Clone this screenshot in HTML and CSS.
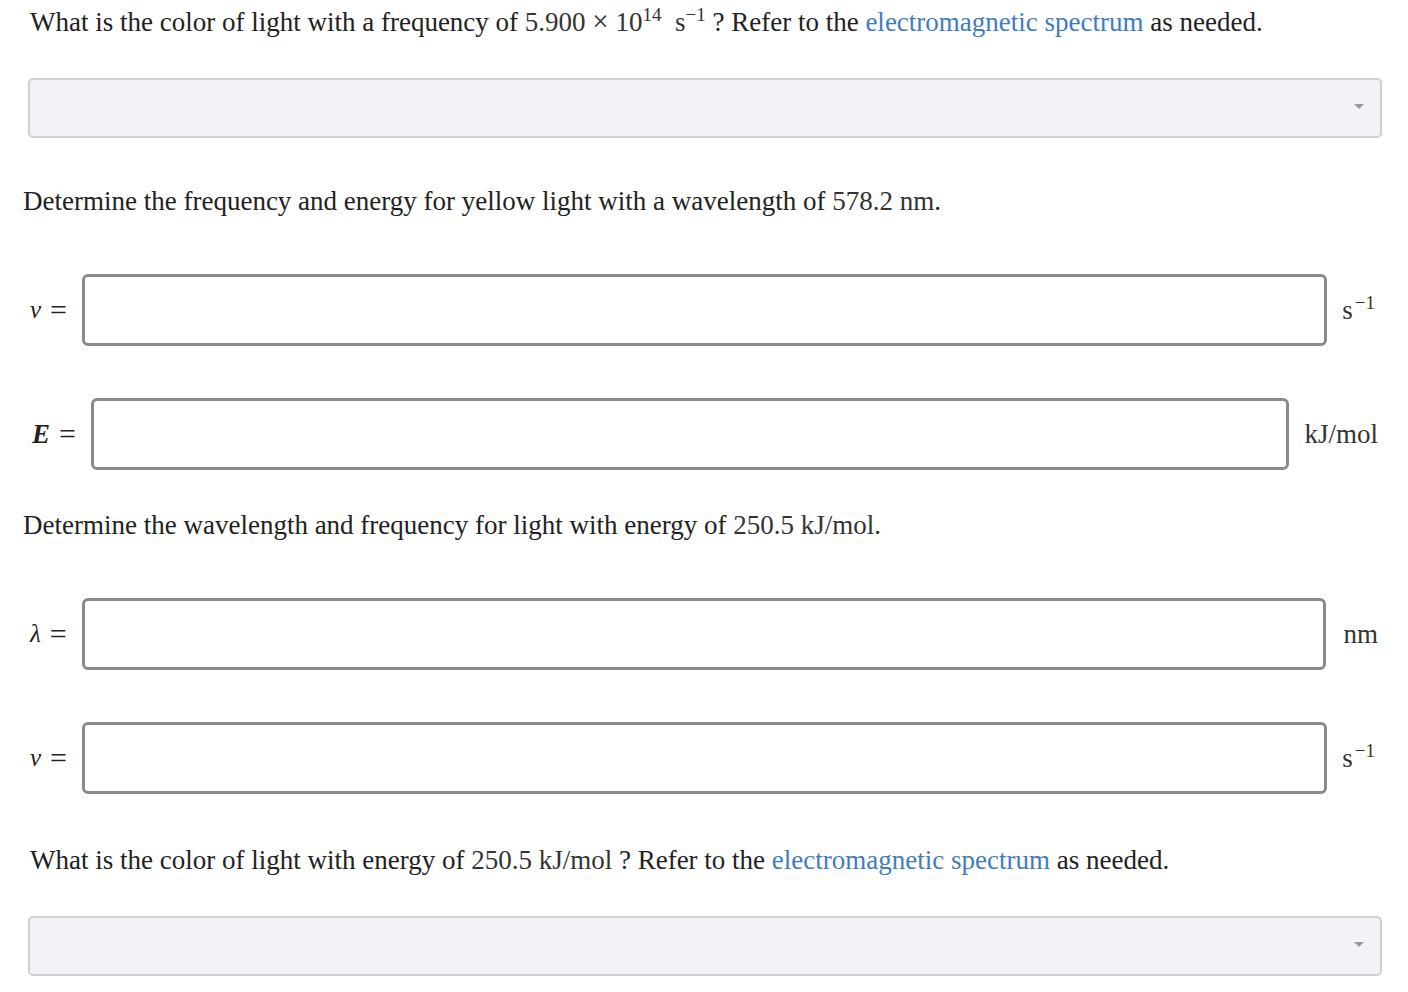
FILE: index.html
```html
<!DOCTYPE html>
<html lang="en">
<head>
    <meta charset="UTF-8">
    <meta name="viewport" content="width=device-width, initial-scale=1.0">
    <title>Light Questions</title>
    <link rel="stylesheet" href="styles.css">
</head>
<body>
    <!-- Part 1: colour from frequency -->
    <p class="prompt prompt-top">What is the color of light with a frequency of <span class="math">5.900 <span class="times">×</span> 10<sup>14</sup>&nbsp; s<sup>−1</sup></span> ? Refer to the <a href="#" class="link">electromagnetic spectrum</a> as needed.</p>
    <div class="select-box"><span class="arrow"></span></div>

    <!-- Part 2: frequency and energy -->
    <p class="prompt prompt-mid">Determine the frequency and energy for yellow light with a wavelength of <span class="math">578.2 nm</span>.</p>
    <div class="answer-row row-first">
        <span class="label"><i>ν</i><span class="eq">=</span></span>
        <div class="input-box"></div>
        <span class="unit unit-inv">s<sup>−1</sup></span>
    </div>
    <div class="answer-row row-next">
        <span class="label label-e"><i class="big">E</i><span class="eq">=</span></span>
        <div class="input-box"></div>
        <span class="unit">kJ/mol</span>
    </div>

    <!-- Part 3: wavelength and frequency -->
    <p class="prompt prompt-after">Determine the wavelength and frequency for light with energy of <span class="math">250.5 kJ/mol</span>.</p>
    <div class="answer-row row-first">
        <span class="label"><i>λ</i><span class="eq">=</span></span>
        <div class="input-box"></div>
        <span class="unit unit-nm">nm</span>
    </div>
    <div class="answer-row row-next">
        <span class="label"><i>ν</i><span class="eq">=</span></span>
        <div class="input-box"></div>
        <span class="unit unit-inv">s<sup>−1</sup></span>
    </div>

    <!-- Part 4: colour from energy -->
    <p class="prompt prompt-last">What is the color of light with energy of <span class="math">250.5 kJ/mol</span> ? Refer to the <a href="#" class="link">electromagnetic spectrum</a> as needed.</p>
    <div class="select-box"><span class="arrow"></span></div>
</body>
</html>
```

FILE: styles.css
```css
body {
    font-family: "Liberation Serif", "Times New Roman", serif;
    font-size: 27px;
    color: #222;
    margin: 0;
    background: #fff;
}
.prompt {
    margin: 0;
    line-height: 29px;
    white-space: nowrap;
}
.prompt-top {
    padding: 7px 0 0 30px;
}
.prompt-mid {
    margin-top: 49px;
    padding-left: 23px;
}
.prompt-after {
    margin-top: 41px;
    padding-left: 23px;
}
.prompt-last {
    margin-top: 52px;
    padding-left: 30px;
}
.math {
    color: #333;
}
.times {
    font-size: 29px;
}
sup {
    font-size: 19px;
    line-height: 0;
    vertical-align: 10px;
}
.link {
    color: #3f7cbf;
    text-decoration: none;
}
.select-box {
    position: relative;
    box-sizing: border-box;
    height: 60px;
    margin: 41px 26px 0 28px;
    background-color: #f2f3f7;
    border: 2px solid #d0d0d3;
    border-radius: 5px;
}
.arrow {
    position: absolute;
    right: 16px;
    top: 24px;
    width: 0;
    height: 0;
    border-left: 5px solid transparent;
    border-right: 5px solid transparent;
    border-top: 5px solid #999;
}
.answer-row {
    display: flex;
    align-items: center;
    gap: 15px;
    padding: 0 30px;
}
.row-first {
    margin-top: 58px;
}
.row-next {
    margin-top: 52px;
}
.label {
    display: flex;
    align-items: center;
    color: #222;
    white-space: nowrap;
}
.label-e {
    padding-left: 2px;
}
.label i {
    font-size: 25px;
}
.label i.big {
    font-size: 27px;
    font-weight: bold;
}
.eq {
    font-size: 30px;
    margin-left: 9px;
}
.input-box {
    flex: 1;
    box-sizing: border-box;
    height: 72px;
    border: 3px solid #8a8a8a;
    border-radius: 6px;
    background: #fff;
}
.unit {
    color: #333;
    white-space: nowrap;
}
.unit-inv {
    margin-right: 3px;
}
.unit-inv sup {
    margin-left: 2px;
}
.unit-nm {
    margin-left: 2px;
}
```
